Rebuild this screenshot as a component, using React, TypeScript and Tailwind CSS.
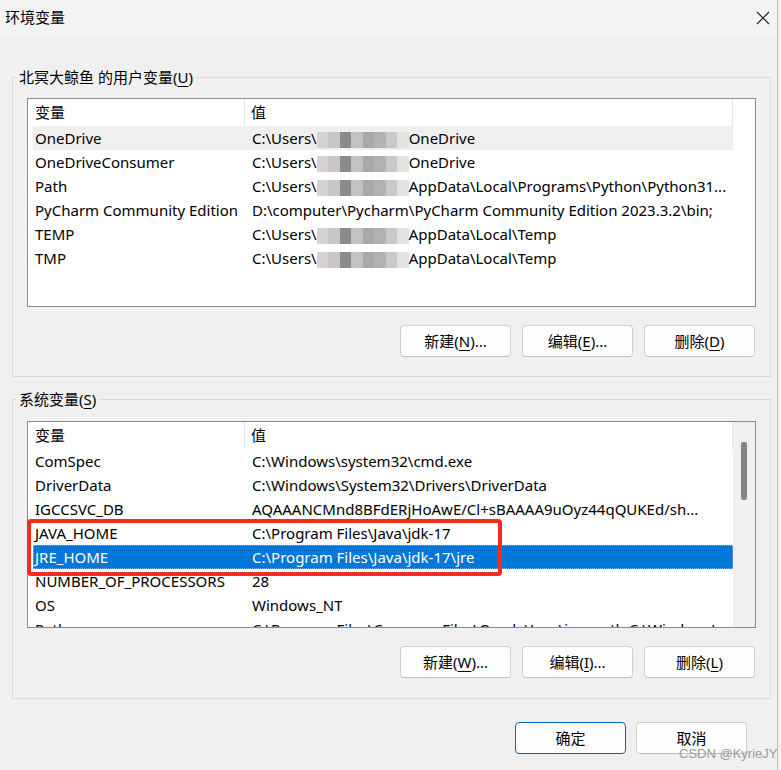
import { ReactNode } from 'react';

const FONT = "font-['Noto_Sans','Noto_Sans_CJK_SC',sans-serif]";

// pixelated blur over the user name
const MOSAIC = [
  'bg-[#d6d2d2]',
  'bg-[#c9c6c6]',
  'bg-[#898b8f]',
  'bg-[#c2c2c2]',
  'bg-[#a9a7a7]',
  'bg-[#b3b1b1]',
  'bg-[#c9c9c9]',
  'bg-[#e3e3e3]',
];

function Mosaic() {
  return (
    <span className="inline-flex h-[16px] w-[92px] align-middle">
      {MOSAIC.map((c, i) => (
        <span key={i} className={`h-full flex-1 ${c}`} />
      ))}
    </span>
  );
}

interface Row {
  name: string;
  value: ReactNode;
  state?: 'hover' | 'selected';
}

const userRows: Row[] = [
  {
    name: 'OneDrive',
    value: (
      <>
        C:\Users\<Mosaic />OneDrive
      </>
    ),
    state: 'hover',
  },
  {
    name: 'OneDriveConsumer',
    value: (
      <>
        C:\Users\<Mosaic />OneDrive
      </>
    ),
  },
  {
    name: 'Path',
    value: (
      <>
        C:\Users\<Mosaic />AppData\Local\Programs\Python\Python31...
      </>
    ),
  },
  {
    name: 'PyCharm Community Edition',
    value: 'D:\\computer\\Pycharm\\PyCharm Community Edition 2023.3.2\\bin;',
  },
  {
    name: 'TEMP',
    value: (
      <>
        C:\Users\<Mosaic />AppData\Local\Temp
      </>
    ),
  },
  {
    name: 'TMP',
    value: (
      <>
        C:\Users\<Mosaic />AppData\Local\Temp
      </>
    ),
  },
];

const systemRows: Row[] = [
  { name: 'ComSpec', value: 'C:\\Windows\\system32\\cmd.exe' },
  { name: 'DriverData', value: 'C:\\Windows\\System32\\Drivers\\DriverData' },
  { name: 'IGCCSVC_DB', value: 'AQAAANCMnd8BFdERjHoAwE/Cl+sBAAAA9uOyz44qQUKEd/sh...' },
  { name: 'JAVA_HOME', value: 'C:\\Program Files\\Java\\jdk-17' },
  { name: 'JRE_HOME', value: 'C:\\Program Files\\Java\\jdk-17\\jre', state: 'selected' },
  { name: 'NUMBER_OF_PROCESSORS', value: '28' },
  { name: 'OS', value: 'Windows_NT' },
  { name: 'Path', value: 'C:\\Program Files\\Common Files\\Oracle\\Java\\javapath;C:\\Windows\\...' },
];

function VarList({ rows, scroll, height }: { rows: Row[]; scroll?: boolean; height: string }) {
  return (
    <div className={`relative flex overflow-hidden border border-[#8a8a8a] bg-white ${height}`}>
      <div className="w-[705px] shrink-0 pl-[5px]">
        <div className="flex h-[27px] items-center border-r border-[#e5e5e5]">
          <div className="flex h-full w-[212px] shrink-0 items-center border-r border-[#e5e5e5] pl-[2px]">变量</div>
          <div className="pl-[6px]">值</div>
        </div>
        {rows.map((r) => (
          <div
            key={r.name}
            className={`flex h-[24px] items-center whitespace-nowrap ${
              r.state === 'selected'
                ? 'bg-[#0078d7] text-white outline-1 -outline-offset-1 outline-dotted outline-[#7fb4e6]'
                : r.state === 'hover'
                  ? 'bg-[#efefef]'
                  : ''
            }`}
          >
            <div className="w-[212px] shrink-0 overflow-hidden pl-[2px]">{r.name}</div>
            <div className="min-w-0 overflow-hidden pl-[7px]">{r.value}</div>
          </div>
        ))}
      </div>
      {scroll ? (
        <div className="flex-1 bg-[#f0f0f0] pl-[8px] pt-[20px]">
          <div className="h-[58px] w-[6px] rounded-[2px] bg-[#858585]" />
        </div>
      ) : (
        <div className="flex-1" />
      )}
    </div>
  );
}

function Btn({ children, primary }: { children: ReactNode; primary?: boolean }) {
  return (
    <button
      className={`flex h-[32px] w-[111px] items-center justify-center rounded-[4px] bg-[#fdfdfd] text-[15px] ${
        primary ? 'border border-[#0067c0]' : 'border border-[#d0d0d0] border-b-[#c0c0c0]'
      }`}
    >
      {children}
    </button>
  );
}

function Key({ k }: { k: string }) {
  return <span className="underline underline-offset-[3px] decoration-1">{k}</span>;
}

export default function App() {
  return (
    <div className={`relative h-[770px] w-[781px] overflow-hidden bg-[#f3f3f3] text-[15px] text-black ${FONT}`}>
      <div className="h-full w-[778px] border-r border-[#bdbdbd] bg-[#f0f0f0]">
        {/* title bar */}
        <div className="flex h-[35px] items-center justify-between bg-[#f3f3f3] pl-[5px] pr-[6px]">
          <span className="leading-none">环境变量</span>
          <svg width="14" height="14" viewBox="0 0 14 14" className="mr-[1px]">
            <path d="M1 1 L13 13 M13 1 L1 13" stroke="#1a1a1a" strokeWidth="1.1" />
          </svg>
        </div>

        <div className="pl-[12px] pr-[6px]">
          <fieldset className="mt-[31px] border border-[#dadada] px-[14px] pb-[19px] pt-[10px]">
            <legend className="-ml-[11px] px-[3px] leading-[22px]">
              北冥大鲸鱼 的用户变量(<Key k="U" />)
            </legend>
            <VarList rows={userRows} height="h-[209px]" />
            <div className="mt-[18px] flex justify-end gap-[11px] pr-[1px]">
              <Btn>
                新建(<Key k="N" />)...
              </Btn>
              <Btn>
                编辑(<Key k="E" />)...
              </Btn>
              <Btn>
                删除(<Key k="D" />)
              </Btn>
            </div>
          </fieldset>

          <fieldset className="mt-[11px] border border-[#dadada] px-[14px] pb-[20px] pt-[11px]">
            <legend className="-ml-[11px] px-[3px] leading-[22px]">
              系统变量(<Key k="S" />)
            </legend>
            <VarList rows={systemRows} scroll height="h-[207px]" />
            <div className="mt-[18px] flex justify-end gap-[11px] pr-[1px]">
              <Btn>
                新建(<Key k="W" />)...
              </Btn>
              <Btn>
                编辑(<Key k="I" />)...
              </Btn>
              <Btn>
                删除(<Key k="L" />)
              </Btn>
            </div>
          </fieldset>
        </div>

        <div className="mt-[23px] flex justify-end gap-[10px] pr-[30px]">
          <Btn primary>确定</Btn>
          <Btn>取消</Btn>
        </div>
      </div>

      {/* annotation box */}
      <div className="absolute left-[27px] top-[519px] h-[57px] w-[475px] rounded-[4px] border-[4px] border-[#fa2a1e]" />

      {/* watermark */}
      <div className="absolute left-[679px] top-[744px] whitespace-nowrap font-['Liberation_Sans',sans-serif] text-[13px] text-[#9a9a9a]">
        CSDN @KyrieJY
      </div>
    </div>
  );
}
